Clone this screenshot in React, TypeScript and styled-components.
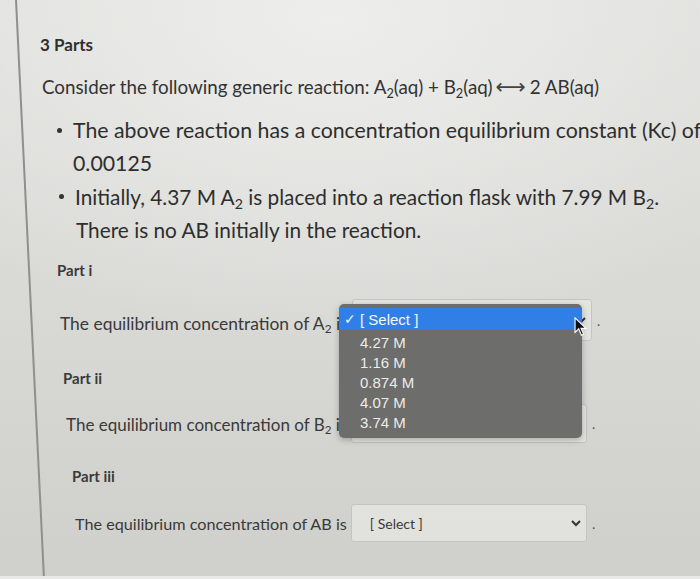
import React from "react";
import styled, { createGlobalStyle } from "styled-components";

const Global = createGlobalStyle`
  html, body { margin: 0; padding: 0; }
  body { font-family: Lato, "Open Sans", sans-serif; color: #333; }
  sub {
    font-size: 0.68em;
    line-height: 0;
    vertical-align: baseline;
    position: relative;
    top: 0.28em;
  }
`;

const Page = styled.div`
  position: relative;
  width: 700px;
  height: 579px;
  overflow: hidden;
  box-sizing: border-box;
  padding-top: 33px;
  background:
    radial-gradient(ellipse 520px 320px at 330px 20px, rgba(240,240,238,0.85), rgba(240,240,238,0) 100%),
    linear-gradient(180deg, #dfdfdc 0%, #d9d9d6 50%, #cfd0cb 100%);
  &::before {
    content: "";
    position: absolute;
    left: 15px;
    top: 0;
    width: 1.5px;
    height: 100%;
    background: #8f8f8c;
    transform: skewX(2.77deg);
    transform-origin: 0 0;
  }
  &::after {
    content: "";
    position: absolute;
    left: 0;
    right: 0;
    bottom: 0;
    height: 3px;
    background: #e9e9e7;
  }
`;

const Header = styled.div<{ $x: number }>`
  margin-left: ${(p) => p.$x}px;
  font-size: 17px;
  line-height: 24px;
  font-weight: 700;
  color: #2f2f2f;
`;

const Intro = styled.div<{ $x: number }>`
  margin: 18px 0 0 ${(p) => p.$x}px;
  font-size: 18.8px;
  line-height: 24px;
  color: #333;
  white-space: nowrap;
`;

const Arrow = styled.span`
  font-family: "DejaVu Sans", sans-serif;
  font-size: 21px;
  line-height: 0;
  margin: 0 4px 0 3px;
  color: #444;
`;

const List = styled.ul`
  list-style: none;
  margin: 15px 0 0 0;
  padding: 0;
`;

const Item = styled.li<{ $x: number; $size: number }>`
  position: relative;
  margin-left: ${(p) => p.$x}px;
  padding-left: 16px;
  font-size: ${(p) => p.$size}px;
  line-height: 33px;
  color: #2e2e2e;
  white-space: nowrap;
  &::before {
    content: "";
    position: absolute;
    left: 0;
    top: 14px;
    width: 5px;
    height: 5px;
    border-radius: 50%;
    background: #333;
  }
`;

const Line = styled.div<{ $dx?: number }>`
  margin-left: ${(p) => p.$dx ?? 0}px;
`;

const PartLabel = styled.div<{ $x: number; $top: number }>`
  margin: ${(p) => p.$top}px 0 0 ${(p) => p.$x}px;
  font-size: 15px;
  line-height: 20px;
  font-weight: 700;
  color: #3a3a3a;
`;

const QuestionRow = styled.div<{ $x: number; $top: number; $h: number; $right: number; $size: number }>`
  display: flex;
  align-items: center;
  margin: ${(p) => p.$top}px 0 0 ${(p) => p.$x}px;
  width: ${(p) => p.$right - p.$x}px;
  height: ${(p) => p.$h}px;
  font-size: ${(p) => p.$size}px;
  color: #3a3a3a;
  white-space: nowrap;
`;

const QText = styled.span<{ $dy: number }>`
  position: relative;
  top: ${(p) => p.$dy}px;
`;

const SelectBox = styled.div`
  flex: 1;
  box-sizing: border-box;
  margin-left: 4px;
  height: 100%;
  display: flex;
  align-items: center;
  justify-content: space-between;
  padding: 0 4px 0 18px;
  border: 1px solid #c4c5c1;
  border-radius: 3px;
  background: rgba(232, 232, 229, 0.7);
  font-size: 14px;
  color: #3a3a3a;
`;

const Period = styled.span`
  width: 10px;
  padding-left: 5px;
  box-sizing: border-box;
  font-size: 14px;
  color: #555;
`;

const Menu = styled.div`
  position: absolute;
  left: 339px;
  top: 304px;
  width: 243px;
  height: 134px;
  box-sizing: border-box;
  padding-top: 4px;
  border-radius: 5px;
  background: #6d6d6b;
  box-shadow: 0 2px 6px rgba(0, 0, 0, 0.25);
  font-family: "Liberation Sans", Arial, sans-serif;
  font-size: 15px;
  color: #ececea;
  z-index: 2;
`;

const Option = styled.div<{ $active?: boolean }>`
  display: flex;
  align-items: center;
  height: ${(p) => (p.$active ? 22 : 20)}px;
  padding-left: ${(p) => (p.$active ? 5 : 21)}px;
  background: ${(p) => (p.$active ? "#2f7fe6" : "transparent")};
  color: ${(p) => (p.$active ? "#f4f8ff" : "#ececea")};
  margin-bottom: ${(p) => (p.$active ? 2 : 0)}px;
`;

const Check = styled.span`
  width: 16px;
  font-family: "DejaVu Sans", sans-serif;
  font-size: 14px;
`;

const Cursor = styled.svg`
  position: absolute;
  left: 574px;
  top: 317px;
  z-index: 3;
`;

const Chevron = () => (
  <svg width="12" height="8" viewBox="0 0 12 8">
    <path d="M2 2 L6 6 L10 2" fill="none" stroke="#333" strokeWidth="2" />
  </svg>
);

const Q = ({
  text,
  x,
  top,
  h,
  right,
  dy,
  size,
}: {
  text: React.ReactNode;
  x: number;
  top: number;
  h: number;
  right: number;
  dy: number;
  size: number;
}) => (
  <QuestionRow $x={x} $top={top} $h={h} $right={right} $size={size}>
    <QText $dy={dy}>{text}</QText>
    <SelectBox>
      <span>[ Select ]</span>
      <Chevron />
    </SelectBox>
    <Period>.</Period>
  </QuestionRow>
);

export default function App() {
  const options = ["4.27 M", "1.16 M", "0.874 M", "4.07 M", "3.74 M"];
  return (
    <>
      <Global />
      <Page>
        <Header $x={40}>3 Parts</Header>
        <Intro $x={42}>
          Consider the following generic reaction: A<sub>2</sub>(aq) + B<sub>2</sub>(aq)
          <Arrow>⟷</Arrow>2 AB(aq)
        </Intro>
        <List>
          <Item $x={57} $size={21.3}>
            <Line>The above reaction has a concentration equilibrium constant (Kc) of</Line>
            <Line>0.00125</Line>
          </Item>
          <Item $x={59} $size={20.8}>
            <Line>
              Initially, 4.37 M A<sub>2</sub> is placed into a reaction flask with 7.99 M B<sub>2</sub>.
            </Line>
            <Line $dx={1}>There is no AB initially in the reaction.</Line>
          </Item>
        </List>
        <PartLabel $x={57} $top={14}>Part i</PartLabel>
        <Q
          x={60}
          top={19}
          h={42}
          right={602}
          dy={3}
          size={17.4}
          text={
            <>
              The equilibrium concentration of A<sub>2</sub> is
            </>
          }
        />
        <PartLabel $x={63} $top={27}>Part ii</PartLabel>
        <Q
          x={66}
          top={16}
          h={39}
          right={597}
          dy={1}
          size={17}
          text={
            <>
              The equilibrium concentration of B<sub>2</sub> is
            </>
          }
        />
        <PartLabel $x={72} $top={23}>Part iii</PartLabel>
        <Q
          x={75}
          top={18}
          h={38}
          right={597}
          dy={0}
          size={16.2}
          text="The equilibrium concentration of AB is"
        />

        <Menu>
          <Option $active>
            <Check>✓</Check>[ Select ]
          </Option>
          {options.map((o) => (
            <Option key={o}>{o}</Option>
          ))}
        </Menu>
        <Cursor width="13" height="20" viewBox="0 0 14 22">
          <path d="M1 1 L1 17 L5 13 L8 20 L10.5 19 L7.5 12.5 L13 12.5 Z" fill="#111" stroke="#fff" strokeWidth="1.2" />
        </Cursor>
      </Page>
    </>
  );
}
